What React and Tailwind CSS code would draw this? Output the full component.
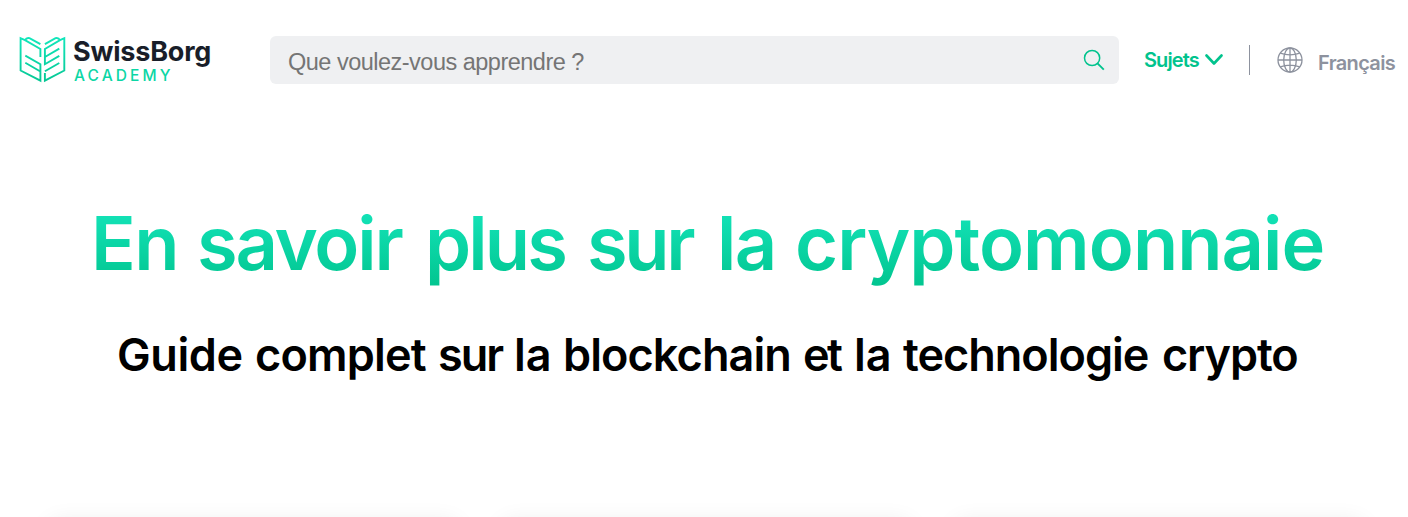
function BookLogo() {
  return (
    <svg width="48" height="48" viewBox="0 0 48 48" fill="none" stroke="url(#book)" strokeWidth="1.9">
      <defs>
        <linearGradient id="book" x1="0" y1="0" x2="0" y2="48" gradientUnits="userSpaceOnUse">
          <stop offset="0" stopColor="#12e8bd" />
          <stop offset="1" stopColor="#06c693" />
        </linearGradient>
      </defs>
      <path d="M22.4 22V14L7 5.2L2.6 3.2V35.5L22.4 45.6V29.2L7.3 20.7M7.3 27.8L22.4 36.5M7 5.2Q8.5 2.4 11.5 3.2L22.4 9.2" />
      <path d="M26.9 38V45.6L46.3 35.5V3.2L42 5.2L26.9 14V29.2L41.3 20.9M26.9 22L41.3 13.6M26.9 36.3L41.3 28M26.9 9.2L37.5 3.2Q40.5 2.4 42 5.2" />
    </svg>
  );
}

function GlobeIcon() {
  return (
    <svg width="26" height="26" viewBox="0 0 26 26" fill="none" stroke="#8d929e" strokeWidth="1.3">
      <circle cx="13" cy="13" r="12" />
      <ellipse cx="13" cy="13" rx="6.3" ry="12" />
      <path d="M13 1V25M1 13H25M3.2 6.2Q13 9.6 22.8 6.2M3.2 19.8Q13 16.4 22.8 19.8" />
    </svg>
  );
}

export default function App() {
  return (
    <div className="h-[517px] w-full overflow-hidden bg-white font-['Inter',sans-serif]">
      <header className="flex h-[120px] items-start pl-[18px]">
        <div className="flex w-[252px] shrink-0 pt-[35px]">
          <BookLogo />
          <div className="pl-[7px]">
            <div className="h-[32px] text-[27px] leading-[33px] font-bold tracking-[-0.2px] whitespace-nowrap text-[#191e29]">SwissBorg</div>
            <div className="h-[16px] pl-px text-[15.5px] leading-[18px] font-medium tracking-[3.1px] whitespace-nowrap text-[#0bd6a5]">ACADEMY</div>
          </div>
        </div>
        <div className="mt-9 flex h-12 w-[849px] shrink-0 items-center justify-between rounded-[6px] bg-[#eff0f2] pr-[14px] pl-[18px]">
          <span className="pt-[3px] font-['Liberation_Sans',sans-serif] text-[23.5px] leading-7 tracking-[-0.51px] text-[#757575]">Que voulez-vous apprendre ?</span>
          <svg width="22" height="22" viewBox="0 0 22 22" fill="none" stroke="#01c38d" strokeWidth="1.5">
            <circle cx="9.1" cy="9" r="7.6" />
            <path d="M14.5 14.4L20.8 20.7" strokeWidth="1.9" />
          </svg>
        </div>
        <div className="mt-9 flex h-12 items-center">
          <span className="ml-[25px] w-[61px] text-[20px] leading-6 font-semibold tracking-[-0.9px] whitespace-nowrap text-[#01c38d]">Sujets</span>
          <svg width="18" height="12" viewBox="0 0 18 12" fill="none" stroke="#01c38d" strokeWidth="2.6" strokeLinecap="round" strokeLinejoin="round">
            <path d="M1.5 1.5L9 9.5L16.5 1.5" />
          </svg>
          <div className="ml-[26px] h-[30px] w-px bg-[#8d929e]" />
          <div className="ml-[27px]"><GlobeIcon /></div>
          <span className="ml-[15px] pt-[5px] text-[20px] leading-6 font-semibold tracking-[-0.65px] text-[#8d929e]">Français</span>
        </div>
      </header>
      <main>
        <h1 className="mt-[76px] ml-[91px] flex h-[95px] w-[1270px] bg-linear-to-b from-[#16e9c0] to-[#01c38d] bg-clip-text text-[74px] leading-[95px] font-semibold whitespace-pre text-transparent">
          <span className="w-[106px] shrink-0 tracking-[-1.5px]">En </span>
          <span className="w-[228px] shrink-0 tracking-[-2.2px]">savoir </span>
          <span className="w-[162px] shrink-0 tracking-[-2.9px]">plus </span>
          <span className="w-[130px] shrink-0 tracking-[-3.3px]">sur </span>
          <span className="w-[78px] shrink-0 tracking-[-1.5px]">la </span>
          <span className="shrink-0 tracking-[-0.95px]">cryptomonnaie</span>
        </h1>
        <h2 className="mt-[34px] ml-[117px] flex h-[60px] text-[45px] leading-[60px] font-semibold whitespace-pre text-black">
          <span className="w-[138px] shrink-0 tracking-[-0.4px]">Guide </span>
          <span className="w-[183px] shrink-0 tracking-[-0.8px]">complet </span>
          <span className="w-[76px] shrink-0 tracking-[-2px]">sur </span>
          <span className="w-[49px] shrink-0">la </span>
          <span className="w-[240px] shrink-0 tracking-[-0.9px]">blockchain </span>
          <span className="w-[51px] shrink-0 tracking-[-2.5px]">et </span>
          <span className="w-[49px] shrink-0">la </span>
          <span className="w-[259px] shrink-0 tracking-[-1px]">technologie </span>
          <span className="shrink-0 tracking-[-1.1px]">crypto</span>
        </h2>
        <div className="mt-[138px] flex gap-[46px] pl-[50px]">
          <div className="h-[100px] w-[407px] shrink-0 rounded-[8px] shadow-[0_0_24px_rgba(0,0,0,0.09)]" />
          <div className="h-[100px] w-[407px] shrink-0 rounded-[8px] shadow-[0_0_24px_rgba(0,0,0,0.09)]" />
          <div className="h-[100px] w-[407px] shrink-0 rounded-[8px] shadow-[0_0_24px_rgba(0,0,0,0.09)]" />
        </div>
      </main>
    </div>
  );
}
